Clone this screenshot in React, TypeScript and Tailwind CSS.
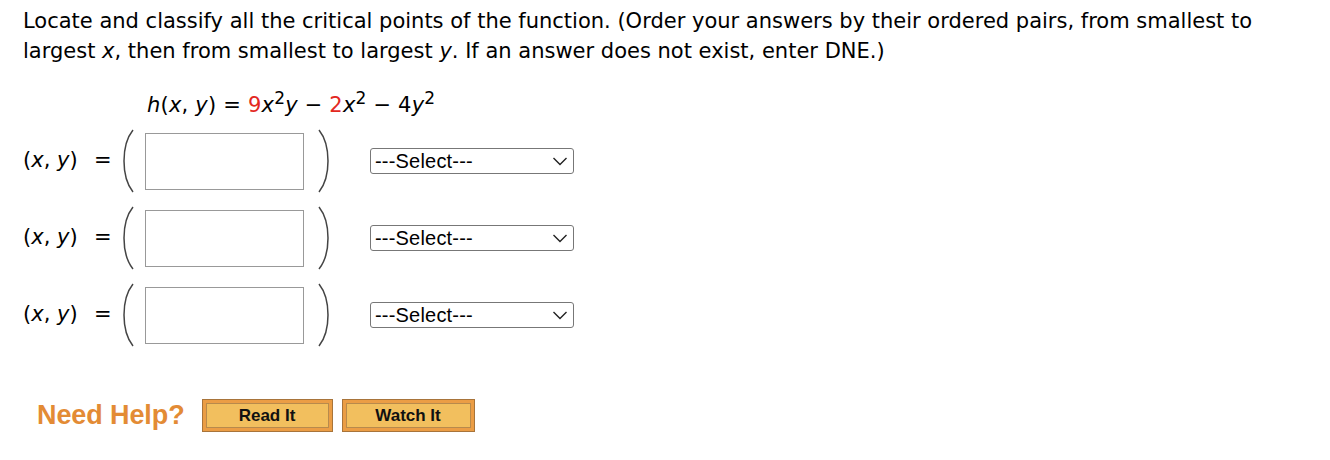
import React from "react";

const verdana = { fontFamily: '"DejaVu Sans", Verdana, sans-serif' };
const arial = { fontFamily: '"Liberation Sans", Arial, sans-serif' };

function Paren({ flip }: { flip?: boolean }) {
  return (
    <svg width="16" height="64" viewBox="0 0 16 64" className={flip ? "-scale-x-100" : ""}>
      <path d="M13 1 C1 16, 1 48, 13 63" fill="none" stroke="#444" strokeWidth="1.5" />
    </svg>
  );
}

function Row() {
  return (
    <div className="flex items-center h-[62px]">
      <div className="w-[71px] text-[21px] text-black" style={verdana}>
        (<i>x</i>, <i>y</i>)
      </div>
      <div className="w-[26px] text-[21px]" style={verdana}>=</div>
      <div className="flex items-center">
        <Paren />
        <div className="ml-[9px] w-[159px] h-[57px] border border-[#999] bg-white" />
        <div className="ml-[12px]">
          <Paren flip />
        </div>
      </div>
      <div className="ml-[38px] w-[204px] h-[26px] border border-[#777] rounded-[3px] flex items-center justify-between pl-[4px] pr-[5px] text-[20px] tracking-[0.2px] text-black" style={arial}>
        <span>---Select---</span>
        <svg width="16" height="10" viewBox="0 0 16 10">
          <path d="M1.5 2 L8 8.5 L14.5 2" fill="none" stroke="#222" strokeWidth="1.4" />
        </svg>
      </div>
    </div>
  );
}

function HelpButton({ label, w }: { label: string; w: string }) {
  return (
    <div className={`${w} h-[33px] border border-[#a8743a] bg-[#eb9d45] p-[3px]`}>
      <div className="h-full border border-[#b88a4c] bg-[#f2bf5e] flex items-center justify-center text-[17px] font-bold text-[#111]" style={arial}>
        {label}
      </div>
    </div>
  );
}

export default function App() {
  return (
    <div className="w-[1330px] h-[460px] bg-white px-[23px] pt-[6px] text-black">
      <p className="text-[21px] leading-[30px]" style={verdana}>
        Locate and classify all the critical points of the function. (Order your answers by their ordered pairs, from smallest to
        <br />
        largest <i>x</i>, then from smallest to largest <i>y</i>. If an answer does not exist, enter DNE.)
      </p>

      <div className="mt-[25px] ml-[124px] text-[21px] leading-[28px] tracking-[0.2px]" style={verdana}>
        <i>h</i>(<i>x</i>, <i>y</i>) = <span className="text-[#e3281f]">9</span>
        <i>x</i>
        <sup className="text-[17px]">2</sup>
        <i>y</i> &minus; <span className="text-[#e3281f]">2</span>
        <i>x</i>
        <sup className="text-[17px]">2</sup> &minus; 4<i>y</i>
        <sup className="text-[17px]">2</sup>
      </div>

      <div className="mt-[11px] flex flex-col gap-[15px]">
        <Row />
        <Row />
        <Row />
      </div>

      <div className="mt-[49px] ml-[14px] flex items-center">
        <span className="text-[27px] font-bold text-[#e38b35] tracking-[-0.1px]" style={arial}>
          Need Help?
        </span>
        <div className="ml-[17px] flex gap-[9px]">
          <HelpButton label="Read It" w="w-[131px]" />
          <HelpButton label="Watch It" w="w-[133px]" />
        </div>
      </div>
    </div>
  );
}
